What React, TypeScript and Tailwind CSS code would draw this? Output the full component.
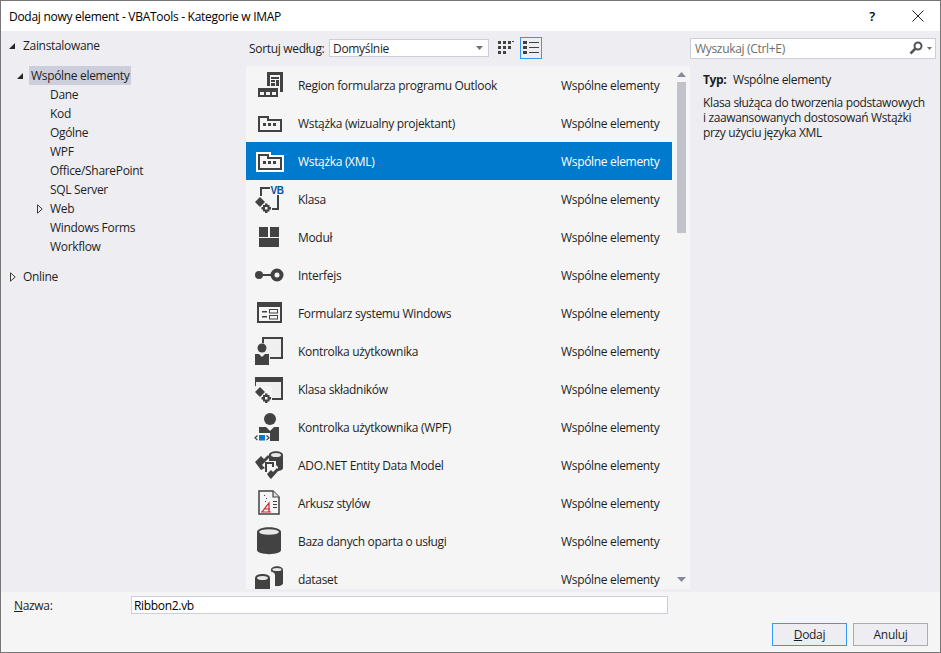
import type { ReactNode } from 'react'

const INK = '#424242'

function Gear({ x, y, color = INK }: { x: number; y: number; color?: string }) {
  return (
    <g transform={`translate(${x} ${y})`}>
      <rect x="-1" y="-1" width="18" height="18" fill="#f5f5f5" />
      <path d="M0 5 L5 0 L10 5 L5 10 Z" fill={color} />
      <path d="M8 8 h2 v-1.500 h2.500 v1.500 h2 v2 h1.500 v2.500 h-1.500 v2 h-2 v1.500 h-2.500 v-1.500 h-2 v-2 h-1.500 v-2.500 h1.500 Z" fill={color} />
      <rect x="10" y="10" width="2.500" height="2.500" fill="#f5f5f5" />
    </g>
  )
}

function Icon({ children }: { children: ReactNode }) {
  return (
    <svg width="32" height="32" viewBox="0 0 32 32" className="shrink-0">
      {children}
    </svg>
  )
}

function OutlookIcon() {
  return (
    <Icon>
      <path d="M13 3 h16 v20 h-3 v-17 h-10 v11 h-3 Z" fill={INK} />
      <rect x="17" y="8" width="8" height="2" fill={INK} />
      <rect x="17" y="11" width="4" height="2" fill={INK} />
      <rect x="22" y="11" width="3" height="6" fill={INK} />
      <rect x="17" y="14" width="4" height="3" fill={INK} />
      <path d="M4 19 h20 v9 h-20 Z" fill={INK} />
      <rect x="6" y="23" width="4" height="3" fill="#f5f5f5" />
      <rect x="12" y="23" width="4" height="3" fill="#f5f5f5" />
      <rect x="18" y="23" width="4" height="3" fill="#f5f5f5" />
    </Icon>
  )
}

function RibbonIcon({ selected = false }: { selected?: boolean }) {
  return (
    <Icon>
      {selected && <path d="M2 7 h15 v3 h13 v17 h-28 Z" fill="#ffffff" />}
      <path d="M4 9 h11 v3 h13 v13 h-24 Z" fill={INK} />
      <path d="M6 11 h7 v3 h13 v9 h-20 Z" fill="#f5f5f5" />
      <rect x="9" y="16" width="3" height="3" fill={INK} />
      <rect x="14" y="16" width="3" height="3" fill={INK} />
      <rect x="19" y="16" width="3" height="3" fill={INK} />
    </Icon>
  )
}

function ClassIcon() {
  return (
    <Icon>
      <path d="M6 4 h10 v2 h-8 v9 h-2 Z" fill={INK} />
      <path d="M25 12 v15 h-9 v-2 h7 v-13 Z" fill={INK} />
      <Gear x={1} y={14} />
      <text x="16.500" y="11" fontSize="10" fontWeight="700" fill="#00539c" fontFamily="Liberation Sans Narrow, Liberation Sans, sans-serif">VB</text>
    </Icon>
  )
}

function ModuleIcon() {
  return (
    <Icon>
      <rect x="5" y="6" width="9" height="10" fill={INK} />
      <rect x="16" y="6" width="9" height="10" fill={INK} />
      <rect x="5" y="17" width="20" height="9" fill={INK} />
    </Icon>
  )
}

function InterfaceIcon() {
  return (
    <Icon>
      <circle cx="5" cy="16" r="4" fill={INK} />
      <rect x="7" y="15" width="11" height="2" fill={INK} />
      <circle cx="23" cy="16" r="4.500" fill="none" stroke={INK} strokeWidth="4" />
    </Icon>
  )
}

function FormIcon() {
  return (
    <Icon>
      <path d="M3 5 h25 v21 h-25 Z M5 10 v14 h21 v-14 Z" fill={INK} fillRule="evenodd" />
      <rect x="8" y="14" width="5" height="1.500" fill={INK} />
      <rect x="8" y="19" width="5" height="1.500" fill={INK} />
      <path d="M15 12 h9 v4.500 h-9 Z M16 13 v2.500 h7 v-2.500 Z" fill={INK} fillRule="evenodd" />
      <path d="M15 18 h9 v4.500 h-9 Z M16 19 v2.500 h7 v-2.500 Z" fill={INK} fillRule="evenodd" />
    </Icon>
  )
}

function UserControlIcon() {
  return (
    <Icon>
      <rect x="8" y="3" width="21" height="21" fill="#efefef" />
      <path d="M8 2 h21 v22 h-13 v-2 h11 v-18 h-17 v5 h-2 Z" fill={INK} />
      <circle cx="8" cy="13" r="5" fill="#f5f5f5" />
      <circle cx="8" cy="13" r="4.500" fill={INK} />
      <path d="M1 19 h4 l3 3 l3 -3 h4 v11 h-14 Z" fill={INK} />
    </Icon>
  )
}

function ComponentClassIcon() {
  return (
    <Icon>
      <rect x="2" y="8" width="26" height="18" fill="#efefef" />
      <path d="M1 4 h28 v23 h-19 v-2 h17 v-16 h-25 v8 h-1 Z" fill={INK} />
      <Gear x={1} y={14} />
    </Icon>
  )
}

function WpfControlIcon() {
  return (
    <Icon>
      <circle cx="16" cy="8" r="6" fill={INK} />
      <path d="M5 16 h7 l4 4 l4 -4 h5 v14 h-20 Z" fill={INK} />
      <rect x="1" y="22" width="15" height="9" fill="#f5f5f5" />
      <rect x="5" y="24" width="6" height="5.500" fill="#007acc" />
      <path d="M3.500 24.500 l-2.500 2.300 l2.500 2.300 M12.500 24.500 l2.500 2.300 l-2.500 2.300" fill="none" stroke={INK} strokeWidth="1.200" />
    </Icon>
  )
}

function EntityIcon() {
  return (
    <Icon>
      <path d="M15 6 c0 -5 14 -5 14 0 v13 c0 2 -3 3 -5 3 v-4 l-2 -2 v-4 h-7 Z" fill={INK} />
      <ellipse cx="22" cy="6" rx="5" ry="2" fill="#e8e8e8" />
      <path d="M1 13 l6 -6 l3 3 l4 -4 l2 2 l-8 8 l3 3 l-4 2 Z" fill={INK} />
      <path d="M11 13 h9 v5 h-2 v-3 h-5 v8 h-2 Z" fill={INK} />
      <path d="M13 25 l4 -4 l2 2 l4 -4 l2 2 l-8 9 l-2 -2 Z" fill={INK} />
    </Icon>
  )
}

function StyleSheetIcon() {
  return (
    <Icon>
      <path d="M5 4 h14 l6 6 v17 h-20 Z" fill="#f5f5f5" stroke={INK} strokeWidth="1.500" />
      <path d="M19 4 v6 h6" fill="#e0e0e0" stroke={INK} strokeWidth="1.200" />
      <rect x="10" y="8" width="1" height="1" fill={INK} />
      <rect x="12" y="11" width="1" height="1" fill={INK} />
      <rect x="11" y="14" width="1" height="1" fill={INK} />
      <rect x="19" y="14" width="4" height="1" fill={INK} />
      <rect x="19" y="17" width="4" height="1" fill={INK} />
      <rect x="19" y="20" width="4" height="1" fill={INK} />
      <path d="M8 25 L15 16 L15 25 M10 22 h6 M7 25 h10" fill="none" stroke="#c8252f" strokeWidth="1.200" />
    </Icon>
  )
}

function DatabaseIcon() {
  return (
    <Icon>
      <path d="M3 7 c0 -6.500 24 -6.500 24 0 v18 c0 5.500 -24 5.500 -24 0 Z" fill={INK} />
      <ellipse cx="15" cy="7" rx="10" ry="2.800" fill="#e8e8e8" />
    </Icon>
  )
}

function DatasetIcon() {
  return (
    <Icon>
      <path d="M17 7 c0 -5 12 -5 12 0 v13 c0 2.500 -4 3.500 -8 3 v-11 c0 -2 -2 -3 -4 -3.500 Z" fill={INK} />
      <ellipse cx="23" cy="6.500" rx="4.500" ry="1.500" fill="#e8e8e8" />
      <path d="M1 15 c0 -5.500 15 -5.500 15 0 v15 h-15 Z" fill={INK} />
      <ellipse cx="8.500" cy="15" rx="5.500" ry="2" fill="#e8e8e8" />
    </Icon>
  )
}

function OpenArrow() {
  return (
    <svg width="8" height="8" viewBox="0 0 8 8" className="shrink-0">
      <path d="M7 1 V7 H1 Z" fill="#262626" />
    </svg>
  )
}

function ClosedArrow() {
  return (
    <svg width="6" height="10" viewBox="0 0 6 10" className="shrink-0">
      <path d="M0.500 0.800 L5.200 5 L0.500 9.200 Z" fill="#f0f0f0" stroke="#3c3c3c" />
    </svg>
  )
}

function ScrollArrow({ up }: { up: boolean }) {
  return (
    <svg width="9" height="5" viewBox="0 0 9 5">
      <path d={up ? 'M4.500 0 L9 5 H0 Z' : 'M0 0 H9 L4.500 5 Z'} fill="#868999" />
    </svg>
  )
}

const ITEMS = [
  { name: 'Region formularza programu Outlook', icon: <OutlookIcon /> },
  { name: 'Wstążka (wizualny projektant)', icon: <RibbonIcon /> },
  { name: 'Wstążka (XML)', icon: <RibbonIcon selected />, selected: true },
  { name: 'Klasa', icon: <ClassIcon /> },
  { name: 'Moduł', icon: <ModuleIcon /> },
  { name: 'Interfejs', icon: <InterfaceIcon /> },
  { name: 'Formularz systemu Windows', icon: <FormIcon /> },
  { name: 'Kontrolka użytkownika', icon: <UserControlIcon /> },
  { name: 'Klasa składników', icon: <ComponentClassIcon /> },
  { name: 'Kontrolka użytkownika (WPF)', icon: <WpfControlIcon /> },
  { name: 'ADO.NET Entity Data Model', icon: <EntityIcon /> },
  { name: 'Arkusz stylów', icon: <StyleSheetIcon /> },
  { name: 'Baza danych oparta o usługi', icon: <DatabaseIcon /> },
  { name: 'dataset', icon: <DatasetIcon /> },
]

const TREE = ['Dane', 'Kod', 'Ogólne', 'WPF', 'Office/SharePoint', 'SQL Server', 'Web', 'Windows Forms', 'Workflow']

export default function App() {
  return (
    <div className="flex h-[653px] w-[941px] flex-col overflow-hidden border border-[#767676] bg-[#f5f5f5] font-['Open_Sans',sans-serif] text-[12px] leading-[19px] tracking-[-0.32px] text-[#1e1e1e]">
      {/* title bar */}
      <div className="flex h-[30px] shrink-0 items-center justify-between bg-white pl-[8px] tracking-[-0.28px] text-[#000000]">
        <span>Dodaj nowy element - VBATools - Kategorie w IMAP</span>
        <div className="flex items-center">
          <span className="w-[20px] text-center text-[13px] font-semibold">?</span>
          <svg width="12" height="12" viewBox="0 0 12 12" className="ml-[30px] mr-[16px]">
            <path d="M0.500 0.500 L11.500 11.500 M11.500 0.500 L0.500 11.500" stroke="#222222" strokeWidth="1" />
          </svg>
        </div>
      </div>

      <div className="flex h-[561px] shrink-0 bg-[#eeeef2]">
        {/* tree */}
        <div className="w-[245px] shrink-0 pt-[5px]">
          <div className="flex h-[19px] items-center pl-[7px]">
            <OpenArrow />
            <span className="ml-[7px]">Zainstalowane</span>
          </div>
          <div className="mt-[11px] flex h-[19px] items-center pl-[15px]">
            <OpenArrow />
            <span className="ml-[5px] flex h-[19px] w-[102px] items-center bg-[#cccedb] pl-[2px]">Wspólne elementy</span>
          </div>
          {TREE.map((label) => (
            <div key={label} className="relative h-[19px] pl-[49px]">
              {label === 'Web' && (
                <span className="absolute left-[36px] top-[5px] flex">
                  <ClosedArrow />
                </span>
              )}
              {label}
            </div>
          ))}
          <div className="mt-[11px] flex h-[19px] items-center pl-[9px]">
            <ClosedArrow />
            <span className="ml-[7px]">Online</span>
          </div>
        </div>

        {/* list column */}
        <div className="flex w-[444px] shrink-0 flex-col">
          <div className="flex h-[35px] shrink-0 items-center pb-[1px]">
            <span className="ml-[3px] w-[80px] text-[#1e1e1e]">Sortuj według:</span>
            <div className="flex h-[18px] w-[160px] items-center justify-between border border-[#cccedb] bg-white pl-[3px] pr-[5px]">
              <span>Domyślnie</span>
              <svg width="7" height="4" viewBox="0 0 7 4">
                <path d="M0 0 H7 L3.500 4 Z" fill="#717171" />
              </svg>
            </div>
            <svg width="16" height="16" viewBox="0 0 16 16" className="ml-[9px]" fill={INK}>
              <rect x="0" y="1" width="3" height="3" />
              <rect x="5" y="1" width="3" height="3" />
              <rect x="10" y="1" width="3" height="3" />
              <rect x="14" y="1" width="2" height="1" />
              <rect x="0" y="6" width="3" height="3" />
              <rect x="5" y="6" width="3" height="3" />
              <rect x="10" y="6" width="3" height="3" />
              <rect x="0" y="11" width="3" height="3" />
              <rect x="5" y="11" width="3" height="3" />
            </svg>
            <div className="ml-[6px] flex h-[22px] w-[22px] items-center justify-center border border-[#3399ff]">
              <svg width="16" height="14" viewBox="0 0 16 14" fill={INK}>
                <rect x="0" y="0" width="4" height="3" />
                <rect x="6" y="1" width="10" height="1" />
                <rect x="0" y="5" width="4" height="3" />
                <rect x="6" y="6" width="10" height="1" />
                <rect x="0" y="10" width="4" height="3" />
                <rect x="6" y="11" width="10" height="1" />
              </svg>
            </div>
          </div>

          <div className="flex h-[523px] shrink-0 overflow-hidden bg-[#f5f5f5]">
            <div className="w-[426px] shrink-0">
              {ITEMS.map((item) => (
                <div
                  key={item.name}
                  className={`flex h-[38px] items-center pl-[8px] ${item.selected ? 'bg-[#007acc] text-white' : ''}`}
                >
                  {item.icon}
                  <span className="ml-[12px] w-[263px] shrink-0">{item.name}</span>
                  <span>Wspólne elementy</span>
                </div>
              ))}
            </div>
            <div className="flex w-[18px] shrink-0 flex-col items-center pt-[6px]">
              <ScrollArrow up />
              <div className="mt-[5px] h-[151px] w-[9px] bg-[#c2c3c9]" />
              <div className="flex-1" />
              <div className="flex pb-[7px]">
                <ScrollArrow up={false} />
              </div>
            </div>
          </div>
        </div>

        {/* details */}
        <div className="min-w-0 flex-1">
          <div className="flex h-[34px] items-center pr-[4px]">
            <div className="flex h-[21px] w-full items-center justify-between border border-[#cccedb] bg-white pl-[4px] pr-[3px] text-[#6d6d6d]">
              <span>Wyszukaj (Ctrl+E)</span>
              <div className="flex items-center gap-[4px]">
                <svg width="14" height="14" viewBox="0 0 14 14">
                  <circle cx="9" cy="5" r="3.500" fill="none" stroke="#555555" strokeWidth="2" />
                  <path d="M6.500 7.500 L1.500 12.500" stroke="#555555" strokeWidth="2.500" />
                </svg>
                <svg width="5" height="3" viewBox="0 0 5 3">
                  <path d="M0 0 H5 L2.500 3 Z" fill="#717171" />
                </svg>
              </div>
            </div>
          </div>
          <div className="pl-[13px] pt-[5px] leading-[15px] tracking-[-0.36px]">
            <div className="flex h-[19px] items-center">
              <span className="w-[30px] font-bold">Typ:</span>
              <span>Wspólne elementy</span>
            </div>
            <p className="mt-[6px] w-[235px]">
              Klasa służąca do tworzenia podstawowych
              <br />i zaawansowanych dostosowań Wstążki
              <br />przy użyciu języka XML
            </p>
          </div>
        </div>
      </div>

      {/* footer */}
      <div className="flex min-h-0 flex-1 flex-col bg-[#f5f5f5]">
        <div className="mt-[4px] flex h-[18px] items-center">
          <span className="ml-[13px] w-[117px]">
            <u>N</u>azwa:
          </span>
          <div className="flex h-[18px] w-[537px] items-center border border-[#cccedb] bg-white pl-[2px] text-[#000000]">Ribbon2.vb</div>
        </div>
        <div className="mt-[9px] flex justify-end gap-[6px] pr-[12px]">
          <button className="h-[23px] w-[75px] border border-[#3399ff] bg-[#eeeef2]">
            <u>D</u>odaj
          </button>
          <button className="h-[23px] w-[75px] border border-[#acacac] bg-[#eeeef2]">Anuluj</button>
        </div>
      </div>
    </div>
  )
}
